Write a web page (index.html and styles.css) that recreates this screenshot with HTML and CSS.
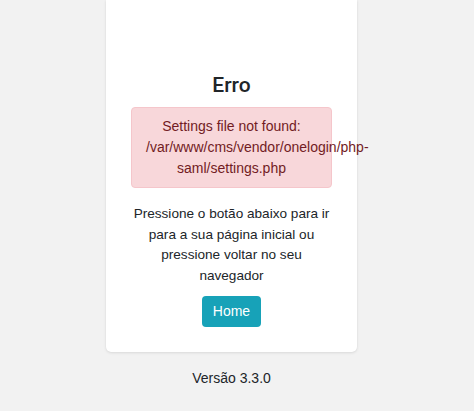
FILE: index.html
```html
<!DOCTYPE html>
<html lang="pt">
<head>
<meta charset="utf-8">
<title>Erro</title>
<link rel="stylesheet" href="styles.css">
</head>
<body>
<div class="page">
  <div class="card">
    <h4 class="title">Erro</h4>
    <div class="alert">Settings file not found: /var/www/cms/vendor/onelogin/php-saml/settings.php</div>
    <p class="message">Pressione o botão abaixo para ir para a sua página inicial ou pressione voltar no seu navegador</p>
    <a class="btn" href="#">Home</a>
  </div>
  <div class="version">Versão 3.3.0</div>
</div>
</body>
</html>
```

FILE: styles.css
```css
html, body {
  margin: 0;
  padding: 0;
  background: #f2f2f2;
}
body {
  font-family: "Liberation Sans", Arial, sans-serif;
  font-size: 14px;
  line-height: 21px;
  color: #212529;
}
.page {
  width: 463px;
  display: flex;
  flex-direction: column;
  align-items: center;
}
.card {
  width: 251px;
  box-sizing: border-box;
  background: #fff;
  padding: 73px 25px 25px;
  border-radius: 0 0 5px 5px;
  box-shadow: 0 1px 3px rgba(0,0,0,0.10), 0 0 1px rgba(0,0,0,0.08);
  display: flex;
  flex-direction: column;
  align-items: center;
  text-align: center;
}
.title {
  margin: 0 0 9px;
  font-family: Roboto, "Liberation Sans", Arial, sans-serif;
  font-size: 21px;
  line-height: 25px;
  font-weight: 500;
  color: #212529;
}
.alert {
  align-self: stretch;
  background: #f8d7da;
  border: 1px solid #f5c6cb;
  border-radius: 4px;
  color: #721c24;
  padding: 8px 14px;
  margin-bottom: 16px;
}
.message {
  margin: 0 0 10px;
  font-size: 13.6px;
  line-height: 20.6px;
}
.btn {
  display: inline-block;
  background: #17a2b8;
  color: #fff;
  text-decoration: none;
  border-radius: 4px;
  padding: 5px 11px;
  line-height: 21px;
  font-size: 14px;
}
.version {
  margin-top: 16px;
  font-size: 14px;
  line-height: 21px;
  color: #212529;
}
```
